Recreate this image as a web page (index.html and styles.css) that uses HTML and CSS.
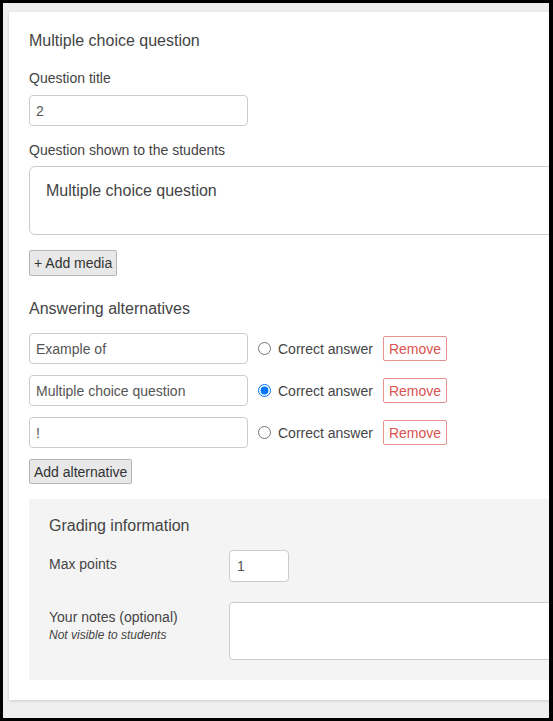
FILE: index.html
```html
<!DOCTYPE html>
<html>
<head>
<meta charset="utf-8">
<link rel="stylesheet" href="styles.css">
</head>
<body>
<div class="frame">
  <div class="card">
    <h2 class="title">Multiple choice question</h2>
    <label class="label label-first">Question title</label>
    <input class="field field-short" type="text" value="2">
    <label class="label label-q">Question shown to the students</label>
    <div class="question-box">Multiple choice question</div>
    <button class="btn btn-media">+ Add media</button>
    <h2 class="title title-alt">Answering alternatives</h2>
    <div class="alts">
      <div class="alt-row">
        <input class="field field-short" type="text" value="Example of">
        <label class="correct"><input class="radio" type="radio" name="c">Correct answer</label>
        <button class="btn-remove">Remove</button>
      </div>
      <div class="alt-row">
        <input class="field field-short" type="text" value="Multiple choice question">
        <label class="correct"><input class="radio" type="radio" name="c" checked>Correct answer</label>
        <button class="btn-remove">Remove</button>
      </div>
      <div class="alt-row">
        <input class="field field-short" type="text" value="!">
        <label class="correct"><input class="radio" type="radio" name="c">Correct answer</label>
        <button class="btn-remove">Remove</button>
      </div>
    </div>
    <button class="btn btn-alt">Add alternative</button>
    <div class="grading">
      <h2 class="title">Grading information</h2>
      <div class="grade-grid">
        <div class="g-label g-label-max">Max points</div>
        <input class="field field-points" type="text" value="1">
        <div class="g-label g-label-notes">Your notes (optional)<span class="hint">Not visible to students</span></div>
        <div class="notes-box"></div>
      </div>
    </div>
  </div>
</div>
</body>
</html>
```
FILE: styles.css
```css
html, body {
  margin: 0;
  padding: 0;
}
body {
  font-family: "Liberation Sans", Arial, sans-serif;
  color: #444;
}
.frame {
  width: 553px;
  height: 721px;
  box-sizing: border-box;
  border-style: solid;
  border-color: #000;
  border-width: 3px 4px 3px 3px;
  background: #efefef;
  overflow: hidden;
  padding: 9px 0 0 6px;
}
.card {
  width: 680px;
  box-sizing: border-box;
  background: #fff;
  padding: 20px 20px 20px 20px;
  box-shadow: 0 1px 3px rgba(0,0,0,0.15);
  display: flex;
  flex-direction: column;
  align-items: flex-start;
}
.title {
  margin: 0;
  font-size: 16px;
  font-weight: normal;
  line-height: 18px;
  color: #444;
}
.label {
  font-size: 14px;
  line-height: 16px;
  display: block;
}
.label-first {
  margin-top: 20px;
}
.field {
  font-family: "Liberation Sans", Arial, sans-serif;
  font-size: 14px;
  color: #555;
  box-sizing: border-box;
  height: 31px;
  border: 1px solid #ccc;
  border-radius: 4px;
  padding: 0 6px;
  background: #fff;
  margin: 0;
  outline: none;
}
.field-short {
  width: 219px;
  margin-top: 9px;
}
.label-q {
  margin-top: 16px;
}
.question-box {
  margin-top: 8px;
  box-sizing: border-box;
  width: 100%;
  height: 69px;
  border: 1px solid #ccc;
  border-radius: 6px;
  padding: 15px 16px;
  font-size: 16px;
  line-height: 18px;
  color: #444;
}
.btn {
  font-family: "Liberation Sans", Arial, sans-serif;
  font-size: 14px;
  color: #333;
  background: #e8e8e8;
  border: 1px solid #b5b5b5;
  border-radius: 2px;
  height: 26px;
  padding: 0 4px;
  margin: 0;
  white-space: nowrap;
}
.btn-media {
  margin-top: 15px;
}
.title-alt {
  margin-top: 24px;
}
.alts {
  display: flex;
  flex-direction: column;
  gap: 11px;
  margin-top: 15px;
}
.alt-row {
  display: flex;
  align-items: center;
}
.alt-row .field-short {
  margin-top: 0;
}
.correct {
  display: flex;
  align-items: center;
  font-size: 14px;
  color: #444;
  margin-left: 10px;
  white-space: nowrap;
}
.radio {
  width: 13px;
  height: 13px;
  margin: 0 7px 0 0;
}
.btn-remove {
  font-family: "Liberation Sans", Arial, sans-serif;
  font-size: 14px;
  color: #d9534f;
  background: #fff;
  border: 1px solid #e8908e;
  border-radius: 2px;
  height: 25px;
  padding: 0 5px;
  margin: 0 0 0 10px;
  white-space: nowrap;
}
.btn-alt {
  margin-top: 11px;
  height: 25px;
}
.grading {
  margin-top: 15px;
  width: 100%;
  box-sizing: border-box;
  background: #f4f4f4;
  padding: 18px 0 20px 20px;
}
.grade-grid {
  margin-top: 15px;
  display: grid;
  grid-template-columns: 180px 1fr;
  row-gap: 20px;
  align-items: start;
}
.g-label {
  font-size: 14px;
  line-height: 16px;
  color: #444;
}
.g-label-max {
  padding-top: 6px;
}
.g-label-notes {
  padding-top: 7px;
  display: flex;
  flex-direction: column;
}
.hint {
  font-style: italic;
  font-size: 12px;
  line-height: 14px;
  margin-top: 3px;
}
.field-points {
  width: 60px;
  height: 32px;
  padding: 0 7px;
}
.notes-box {
  height: 58px;
  background: #fff;
  border: 1px solid #ccc;
  border-radius: 4px;
  box-sizing: border-box;
}
```
